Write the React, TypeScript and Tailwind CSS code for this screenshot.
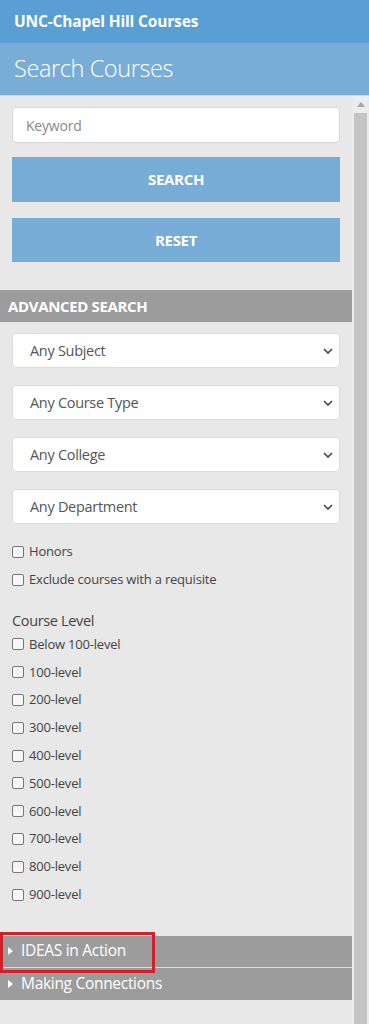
import React from "react";

const font = { fontFamily: '"Open Sans", "Noto Sans", sans-serif' };

function Chevron() {
  return (
    <svg width="10" height="6" viewBox="0 0 10 6" className="shrink-0">
      <path d="M1 1 L5 5 L9 1" fill="none" stroke="#444" strokeWidth="1.6" />
    </svg>
  );
}

function Select({ label }: { label: string }) {
  return (
    <div className="mx-3 h-[35px] bg-white rounded-[4px] border border-[#dcdcdc] flex items-center justify-between pl-[17px] pr-[6px]">
      <span className="text-[14.5px] text-[#555] tracking-[-0.3px]">{label}</span>
      <Chevron />
    </div>
  );
}

function Check({ label }: { label: string }) {
  return (
    <div className="flex items-center gap-[5px] h-[27.8px]">
      <span className="w-[12px] h-[12px] border border-[#777] rounded-[2px] bg-[#f6f6f6]" />
      <span className="text-[13px] text-[#444] tracking-[-0.2px]">{label}</span>
    </div>
  );
}

function Tri() {
  return (
    <svg width="5" height="8" viewBox="0 0 5 8">
      <path d="M0 0 L5 4 L0 8 Z" fill="#fff" />
    </svg>
  );
}

export default function App() {
  const levels = [
    "100-level",
    "200-level",
    "300-level",
    "400-level",
    "500-level",
    "600-level",
    "700-level",
    "800-level",
    "900-level",
  ];
  return (
    <div className="w-[369px] h-[1024px] bg-[#e8e8e8] overflow-hidden flex flex-col" style={font}>
      <div className="h-[43px] bg-[#5a9fd3] flex items-center px-[14px] shrink-0">
        <span className="text-white font-bold text-[15.5px] tracking-[-0.15px]">UNC-Chapel Hill Courses</span>
      </div>
      <div className="h-[53px] bg-[#7aadd6] flex items-center px-[14px] shrink-0 border-b border-[#d0d8e0]">
        <span className="text-white font-light text-[23.5px] tracking-[-0.4px]">Search Courses</span>
      </div>
      <div className="flex flex-1 min-h-0">
        <div className="w-[352px] flex flex-col">
          <div className="mt-[11px] mx-3 h-[36px] bg-white rounded-[4px] border border-[#d6d6d6] flex items-center px-[13px]">
            <span className="text-[14px] text-[#888] tracking-[-0.2px]">Keyword</span>
          </div>
          <div className="mt-[14px] mx-3 h-[45px] bg-[#76acd5] flex items-center justify-center">
            <span className="text-white font-bold text-[15px] tracking-[-0.3px]">SEARCH</span>
          </div>
          <div className="mt-[16px] mx-3 h-[44px] bg-[#76acd5] flex items-center justify-center">
            <span className="text-white font-bold text-[15px] tracking-[-0.3px]">RESET</span>
          </div>
          <div className="mt-[28px] h-[32px] bg-[#9c9c9c] flex items-center px-[8px]">
            <span className="text-white font-bold text-[15px] tracking-[-0.35px]">ADVANCED SEARCH</span>
          </div>
          <div className="mt-[11px] flex flex-col gap-[17px]">
            <Select label="Any Subject" />
            <Select label="Any Course Type" />
            <Select label="Any College" />
            <Select label="Any Department" />
          </div>
          <div className="mt-[14px] px-3 flex flex-col">
            <Check label="Honors" />
            <Check label="Exclude courses with a requisite" />
          </div>
          <div className="mt-[17px] px-3">
            <div className="text-[14.5px] text-[#444] tracking-[-0.35px] leading-[20px]">Course Level</div>
            <div className="flex flex-col">
              <Check label="Below 100-level" />
              {levels.map((l) => (
                <Check key={l} label={l} />
              ))}
            </div>
          </div>
          <div className="mt-[27px] flex flex-col">
            <div className="relative h-[32px] bg-[#9c9c9c] flex items-center gap-[8px] px-[8px] border-b border-[#e0e0e0]">
              <Tri />
              <span className="text-white text-[15.5px] tracking-[-0.3px]">IDEAS in Action</span>
              <div className="absolute left-0 top-[-4px] w-[155px] h-[41px] border-[3px] border-[#d0202a]" />
            </div>
            <div className="h-[32px] bg-[#9c9c9c] flex items-center gap-[8px] px-[8px]">
              <Tri />
              <span className="text-white text-[15.5px] tracking-[-0.3px]">Making Connections</span>
            </div>
          </div>
        </div>
        <div className="w-[17px] bg-[#ececec] flex flex-col items-center">
          <svg width="8" height="5" viewBox="0 0 8 5" className="mt-[6px]">
            <path d="M0 5 L4 0 L8 5 Z" fill="#a8a8a8" />
          </svg>
          <div className="mt-[6px] w-[13px] flex-1 bg-[#c4c4c4]" />
        </div>
      </div>
    </div>
  );
}
